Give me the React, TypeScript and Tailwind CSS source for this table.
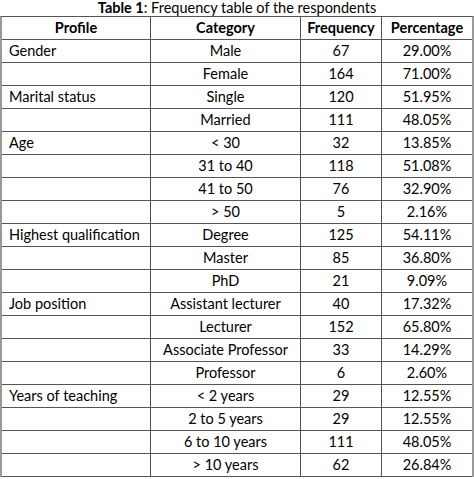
import React from "react";

type Row = { profile?: string; category: string; freq: string; pct: string };

const rows: Row[] = [
  { profile: "Gender", category: "Male", freq: "67", pct: "29.00%" },
  { category: "Female", freq: "164", pct: "71.00%" },
  { profile: "Marital status", category: "Single", freq: "120", pct: "51.95%" },
  { category: "Married", freq: "111", pct: "48.05%" },
  { profile: "Age", category: "< 30", freq: "32", pct: "13.85%" },
  { category: "31 to 40", freq: "118", pct: "51.08%" },
  { category: "41 to 50", freq: "76", pct: "32.90%" },
  { category: "> 50", freq: "5", pct: "2.16%" },
  { profile: "Highest qualification", category: "Degree", freq: "125", pct: "54.11%" },
  { category: "Master", freq: "85", pct: "36.80%" },
  { category: "PhD", freq: "21", pct: "9.09%" },
  { profile: "Job position", category: "Assistant lecturer", freq: "40", pct: "17.32%" },
  { category: "Lecturer", freq: "152", pct: "65.80%" },
  { category: "Associate Professor", freq: "33", pct: "14.29%" },
  { category: "Professor", freq: "6", pct: "2.60%" },
  { profile: "Years of teaching", category: "< 2 years", freq: "29", pct: "12.55%" },
  { category: "2 to 5 years", freq: "29", pct: "12.55%" },
  { category: "6 to 10 years", freq: "111", pct: "48.05%" },
  { category: "> 10 years", freq: "62", pct: "26.84%" },
];

function Cells({ a, b, c, d, head }: { a: string; b: string; c: string; d: string; head?: boolean }) {
  return (
    <div className={"flex h-[23px] border-b border-[#555] leading-[22px] text-black " + (head ? "font-bold" : "")}>
      <div className={"w-[149px] shrink-0 border-r border-[#555] " + (head ? "text-center" : "pl-[7px]")}>{a}</div>
      <div className="w-[150px] shrink-0 border-r border-[#555] text-center">{b}</div>
      <div className="w-[81px] shrink-0 border-r border-[#555] text-center">{c}</div>
      <div className="flex-1 text-center">{d}</div>
    </div>
  );
}

export default function App() {
  return (
    <div className="w-[474px] h-[479px] bg-white text-[14.5px]" style={{ fontFamily: "Lato, 'Liberation Sans', sans-serif" }}>
      <div className="h-[16px] text-center leading-[16px] text-black whitespace-nowrap">
        <span className="font-bold">Table 1</span>: Frequency table of the respondents
      </div>
      <div className="w-[474px] border-t border-[#555] border-l-2 border-l-[#9a9a9a] border-r-2 border-r-[#9a9a9a]">
        <Cells head a="Profile" b="Category" c="Frequency" d="Percentage" />
        {rows.map((r, i) => (
          <Cells key={i} a={r.profile ?? ""} b={r.category} c={r.freq} d={r.pct} />
        ))}
      </div>
    </div>
  );
}
